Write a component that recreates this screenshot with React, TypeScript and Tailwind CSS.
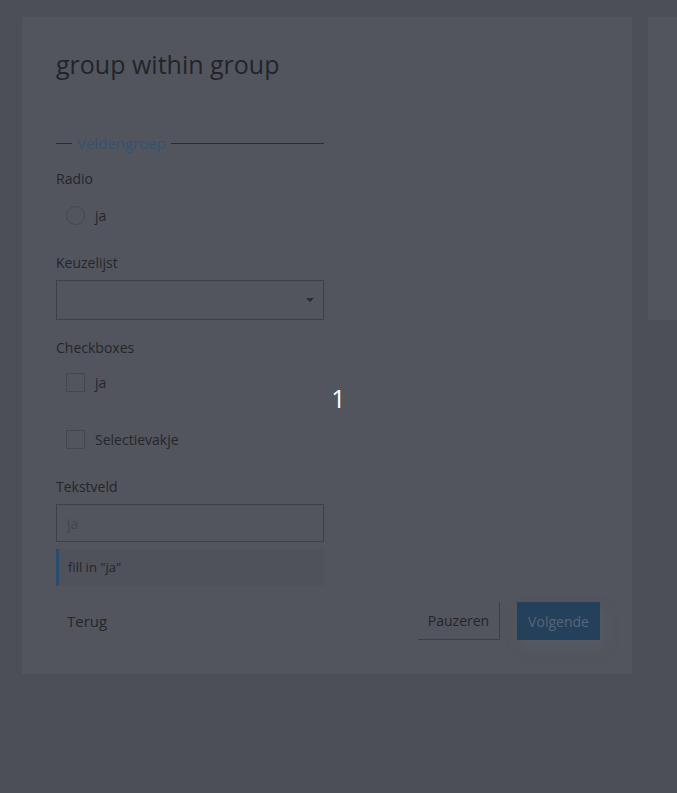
import React from 'react';

const font = { fontFamily: '"Open Sans", "Noto Sans", sans-serif' };

function Label({ children }: { children: React.ReactNode }) {
  return <div className="h-[22px] text-[14px] leading-[22px] text-[#24262b]">{children}</div>;
}

export default function App() {
  return (
    <div className="relative min-h-screen overflow-hidden bg-[#4c4f57]" style={font}>
      <div className="flex gap-4 pl-[22px] pt-[17px]">
        {/* main card */}
        <div className="h-[657px] w-[610px] shrink-0 bg-[#52555d] pl-[34px] pt-[27px]">
          <h1 className="h-[40px] text-[25px] leading-[40px] text-[#222429]">group within group</h1>

          <div className="mt-[46px] w-[268px]">
            {/* fieldset legend */}
            <div className="flex h-[26px] items-center">
              <span className="h-px w-4 bg-[#2a2c32]" />
              <span className="px-[5px] text-[15px] text-[#34536f]">Veldengroep</span>
              <span className="h-px flex-1 bg-[#2a2c32]" />
            </div>

            <div className="mt-[12px]">
              <Label>Radio</Label>
              <div className="mt-[15px] flex h-[20px] items-center pl-[10px]">
                <span className="h-[19px] w-[19px] rounded-full border border-[#44474e]" />
                <span className="ml-[10px] text-[14px] text-[#24262b]">ja</span>
              </div>
            </div>

            <div className="mt-[27px]">
              <Label>Keuzelijst</Label>
              <div className="mt-[6px] flex h-[40px] items-center justify-end border border-[#3d4047] pr-[9px]">
                <span className="h-0 w-0 border-x-[4px] border-t-[4px] border-x-transparent border-t-[#2a2c32]" />
              </div>
            </div>

            <div className="mt-[17px]">
              <Label>Checkboxes</Label>
              <div className="mt-[13px] flex h-[20px] items-center pl-[10px]">
                <span className="h-[19px] w-[19px] border border-[#44474e]" />
                <span className="ml-[10px] text-[14px] text-[#24262b]">ja</span>
              </div>
              <div className="mt-[37px] flex h-[20px] items-center pl-[10px]">
                <span className="h-[19px] w-[19px] border border-[#44474e]" />
                <span className="ml-[10px] text-[14px] text-[#24262b]">Selectievakje</span>
              </div>
            </div>

            <div className="mt-[27px]">
              <Label>Tekstveld</Label>
              <div className="mt-[6px] flex h-[38px] items-center border border-[#3d4047] px-[10px] text-[14px] text-[#43464d]">
                ja
              </div>
              <div className="mt-[7px] flex h-[37px] items-center border-l-[3px] border-[#2a4c6c] bg-[#4f525a] pl-[9px] text-[13px] text-[#24262b]">
                fill in "ja"
              </div>
            </div>
          </div>

          <div className="mt-[16px] flex h-[38px] w-[544px] items-center">
            <span className="pl-[11px] text-[15px] text-[#24262b]">Terug</span>
            <div className="ml-auto flex gap-[17px]">
              <button className="h-[38px] w-[82px] border-b border-r border-[#3d4047] text-[14px] text-[#24262b]">
                Pauzeren
              </button>
              <button className="h-[38px] w-[83px] bg-[#24405a] text-[14px] text-[#56677a] shadow-[4px_8px_10px_rgba(90,95,105,0.5)]">
                Volgende
              </button>
            </div>
          </div>
        </div>

        {/* side card */}
        <div className="h-[303px] w-[120px] shrink-0 bg-[#52555d]" />
      </div>

      {/* overlay counter */}
      <div className="pointer-events-none absolute left-0 right-0 top-[380px] text-center text-[25px] text-white">
        1
      </div>
    </div>
  );
}
